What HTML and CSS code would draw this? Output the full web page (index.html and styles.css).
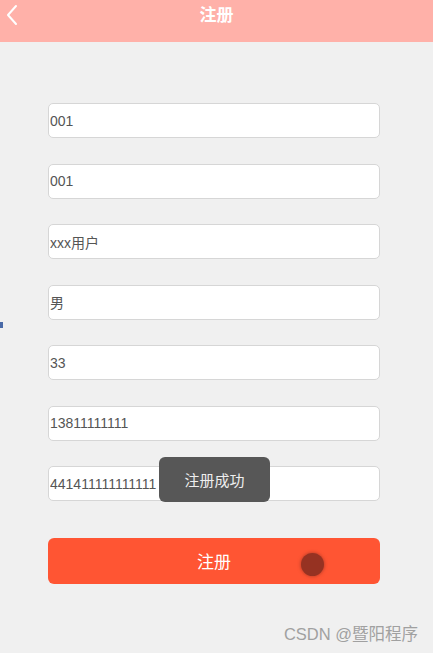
FILE: index.html
```html
<!DOCTYPE html>
<html lang="zh">
<head>
    <meta charset="UTF-8">
    <meta name="viewport" content="width=device-width, initial-scale=1.0">
    <title>注册</title>
    <link rel="stylesheet" href="styles.css">
</head>
<body>
    <header class="topbar">
        <svg class="back" width="14" height="22" viewBox="0 0 14 22">
            <path d="M11 2 L3 11 L11 20" fill="none" stroke="#fff" stroke-width="2" stroke-linecap="round" stroke-linejoin="round"/>
        </svg>
        <h1>注册</h1>
    </header>

    <span class="side-mark"></span>

    <form class="form">
        <input class="field" type="text" value="001">
        <input class="field" type="text" value="001">
        <input class="field" type="text" value="xxx用户">
        <input class="field" type="text" value="男">
        <input class="field" type="text" value="33">
        <input class="field" type="text" value="13811111111">
        <div class="field-wrap">
            <input class="field" type="text" value="441411111111111">
            <div class="toast">注册成功</div>
        </div>
        <button class="submit" type="button">注册<span class="touch"></span></button>
    </form>

    <div class="watermark">CSDN @暨阳程序</div>
</body>
</html>
```

FILE: styles.css
```css
body {
    margin: 0;
    padding: 0;
    background-color: #f0f0f0;
    font-family: "Liberation Sans", Arial, "Noto Sans CJK SC", sans-serif;
    height: 653px;
    position: relative;
    overflow: hidden;
}

.topbar {
    height: 42px;
    background-color: #ffb1a9;
    display: flex;
    justify-content: center;
    align-items: flex-start;
    box-sizing: border-box;
    padding-top: 6px;
    position: relative;
}

.topbar h1 {
    margin: 0;
    font-size: 17px;
    line-height: 20px;
    font-weight: bold;
    color: #fff;
}

.back {
    position: absolute;
    left: 5px;
    top: 4px;
}

.side-mark {
    position: absolute;
    left: 0;
    top: 322px;
    width: 3px;
    height: 6px;
    background-color: #4a6aa8;
}

.form {
    width: 332px;
    margin: 61px 0 0 48px;
    display: flex;
    flex-direction: column;
    gap: 25.5px;
}

.field-wrap {
    position: relative;
}

.field {
    width: 100%;
    height: 35px;
    box-sizing: border-box;
    border: 1px solid #d6d6d6;
    border-radius: 5px;
    background-color: #fff;
    padding: 0 1px;
    font-family: "Liberation Sans", Arial, "Noto Sans CJK SC", sans-serif;
    font-size: 14px;
    color: #555;
    outline: none;
}

.toast {
    position: absolute;
    left: 111px;
    top: -9px;
    width: 111px;
    height: 45px;
    background-color: #575757;
    border-radius: 6px;
    color: #eee;
    font-size: 15px;
    display: flex;
    align-items: center;
    justify-content: center;
}

.submit {
    margin-top: 11px;
    height: 46px;
    border: none;
    border-radius: 6px;
    background-color: #ff5533;
    color: #fff;
    font-family: "Liberation Sans", Arial, "Noto Sans CJK SC", sans-serif;
    font-size: 17px;
    position: relative;
}

.touch {
    position: absolute;
    left: 253px;
    top: 15px;
    width: 23px;
    height: 23px;
    border-radius: 50%;
    background-color: #963222;
    box-shadow: 0 0 3px 1px rgba(150, 50, 34, 0.5);
}

.watermark {
    position: absolute;
    right: 15px;
    bottom: 8px;
    font-size: 16.5px;
    color: #a0a0a0;
}
```
